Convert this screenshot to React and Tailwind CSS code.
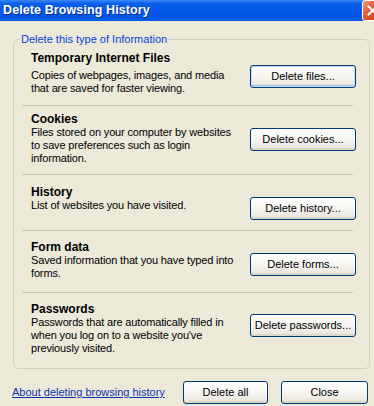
import React from "react";

const sections = [
  {
    title: "Temporary Internet Files",
    lines: ["Copies of webpages, images, and media", "that are saved for faster viewing."],
    button: "Delete files...",
    box: "pt-[6px] pb-[10px]",
    desc: "mt-[4px]",
    btn: "mt-[19px]",
    isDefault: true,
  },
  {
    title: "Cookies",
    lines: ["Files stored on your computer by websites", "to save preferences such as login", "information."],
    button: "Delete cookies...",
    box: "pt-[7px] pb-[9px]",
    desc: "mt-0",
    btn: "mt-[22px]",
  },
  {
    title: "History",
    lines: ["List of websites you have visited."],
    button: "Delete history...",
    box: "pt-[11px] pb-[18px]",
    desc: "mt-0",
    btn: "mt-[22px]",
  },
  {
    title: "Form data",
    lines: ["Saved information that you have typed into", "forms."],
    button: "Delete forms...",
    box: "pt-[10px] pb-[12px]",
    desc: "mt-0",
    btn: "mt-[22px]",
  },
  {
    title: "Passwords",
    lines: ["Passwords that are automatically filled in", "when you log on to a website you've", "previously visited."],
    button: "Delete passwords...",
    box: "pt-[10px] pb-[13px]",
    desc: "mt-0",
    btn: "mt-[21px]",
  },
];

function XpButton({ children, className = "", isDefault = false }) {
  return (
    <button
      type="button"
      className={`flex items-center justify-center rounded-[3px] border border-[#003c74] bg-[linear-gradient(180deg,#ffffff_0%,#f5f4ef_55%,#e6e3d6_100%)] text-[11px] leading-none text-black ${
        isDefault
          ? "shadow-[inset_0_0_0_1px_#c6dcf8,inset_0_-1px_0_1px_#9dbdec]"
          : "shadow-[inset_0_-2px_0_#dcd7cb]"
      } ${className}`}
    >
      {children}
    </button>
  );
}

export default function App() {
  return (
    <div className="w-[374px] h-[406px] overflow-hidden bg-[#ece9d8] font-['Liberation_Sans',Arial,sans-serif] text-black">
      {/* Title bar */}
      <div className="relative h-[21px] bg-[linear-gradient(180deg,#3b88f5_0%,#0a5de8_18%,#0055e5_80%,#0a5fe9_100%)] flex items-center">
        <span className="ml-[3px] text-[12.5px] font-bold text-white tracking-[0.1px] [text-shadow:1px_1px_0_#0a2f8c]">
          Delete Browsing History
        </span>
        <div className="absolute left-[362px] top-0 w-[21px] h-[21px] rounded-[3px] border border-white bg-[linear-gradient(135deg,#f09a7a_0%,#e0552f_45%,#c8401c_100%)] flex items-center justify-center">
          <svg width="11" height="11" viewBox="0 0 11 11">
            <path d="M1.5 1.5 L9.5 9.5 M9.5 1.5 L1.5 9.5" stroke="#ffffff" strokeWidth="2" strokeLinecap="square" />
          </svg>
        </div>
      </div>

      {/* Group box */}
      <fieldset className="ml-[13px] mt-[12px] w-[357px] rounded-[5px] border border-[#d0d0bf]">
        <legend className="ml-[6px] px-[1px] text-[11px] leading-[13px] text-[#0046d5]">
          Delete this type of Information
        </legend>
        <div className="ml-[8px]">
          {sections.map((s, i) => (
            <div key={s.title}>
              <div className="flex w-[334px] items-start">
                <div className={`w-[228px] pl-[9px] ${s.box}`}>
                  <div className="text-[12px] font-bold leading-[13px]">{s.title}</div>
                  <div className={`${s.desc} text-[11px] leading-[13px] tracking-[-0.15px]`}>
                    {s.lines.map((l) => (
                      <div key={l}>{l}</div>
                    ))}
                  </div>
                </div>
                <XpButton className={`${s.btn} w-[106px] h-[23px]`} isDefault={s.isDefault}>
                  {s.button}
                </XpButton>
              </div>
              {i < sections.length - 1 && <div className="h-px w-[331px] bg-[#c9c6b6]" />}
            </div>
          ))}
        </div>
      </fieldset>

      {/* Bottom row */}
      <div className="mt-[12px] flex items-start">
        <a
          href="#"
          onClick={(e) => e.preventDefault()}
          className="ml-[12px] mt-[5px] w-[171px] text-[11px] leading-[13px] text-[#0b33b0] underline"
        >
          About deleting browsing history
        </a>
        <XpButton className="w-[85px] h-[23px]">Delete all</XpButton>
        <XpButton className="ml-[13px] w-[87px] h-[23px]">Close</XpButton>
      </div>
    </div>
  );
}
